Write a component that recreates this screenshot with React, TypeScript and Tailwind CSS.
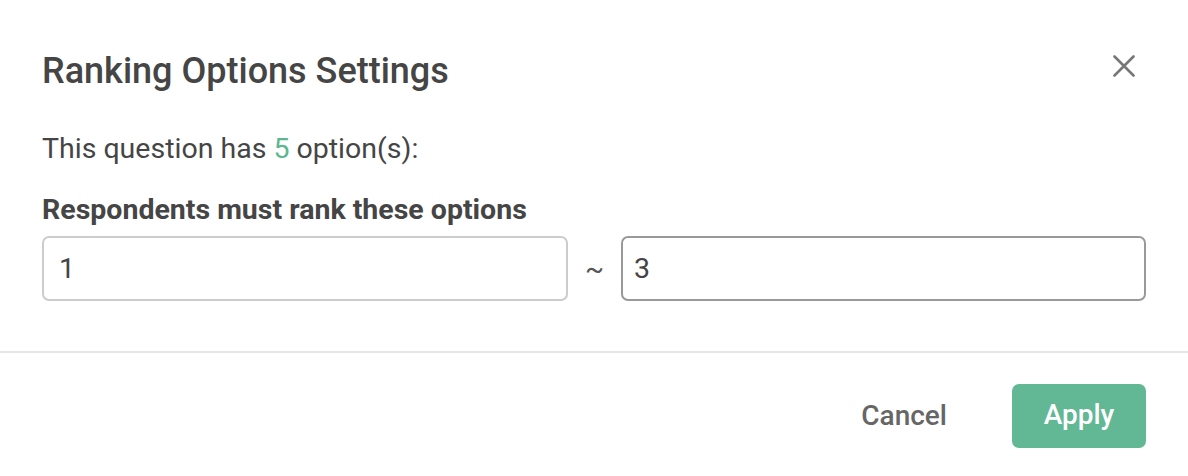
import React from "react";

export default function App() {
  return (
    <div className="w-[1188px] h-[476px] bg-white text-[#444] font-['Roboto',sans-serif] flex flex-col">
      <div className="pl-[42px] pr-[42px] pt-[50px] flex items-start justify-between">
        <h1 className="text-[36px] font-medium leading-[42px] text-[#454545]">Ranking Options Settings</h1>
        <button className="mt-[5px] mr-[11px] w-[22px] h-[22px] flex items-center justify-center text-[#777]">
          <svg width="22" height="22" viewBox="0 0 22 22" fill="none" stroke="currentColor" strokeWidth="2.6" strokeLinecap="round">
            <path d="M1.5 1.5L20.5 20.5M20.5 1.5L1.5 20.5" />
          </svg>
        </button>
      </div>
      <p className="px-[42px] mt-[40px] text-[28.5px] leading-[34px] text-[#454545]">
        This question has <span className="text-[#5db78f]">5</span> option(s):
      </p>
      <p className="px-[42px] mt-[27px] text-[28.5px] leading-[34px] font-bold text-[#454545]">Respondents must rank these options</p>
      <div className="px-[42px] mt-[9px] flex items-center">
        <div className="w-[526px] shrink-0 h-[65px] border-2 border-[#cccccc] rounded-[7px] flex items-center px-[15px] text-[28.5px] leading-[34px] text-[#454545]">1</div>
        <span className="w-[53px] shrink-0 text-center text-[28px] leading-[34px] text-[#555]">~</span>
        <div className="flex-1 h-[65px] border-2 border-[#999999] rounded-[7px] flex items-center px-[11px] text-[28.5px] leading-[34px] text-[#454545]">3</div>
      </div>
      <div className="mt-[50px] h-[2px] bg-[#e6e6e6]"></div>
      <div className="flex justify-end items-center px-[42px] pt-[31px] gap-[65px]">
        <button className="text-[28px] leading-[34px] font-medium text-[#666]">Cancel</button>
        <button className="w-[134px] h-[64px] rounded-[7px] bg-[#62b794] text-white text-[28px] leading-[34px] font-medium pb-[2px]">Apply</button>
      </div>
    </div>
  );
}
